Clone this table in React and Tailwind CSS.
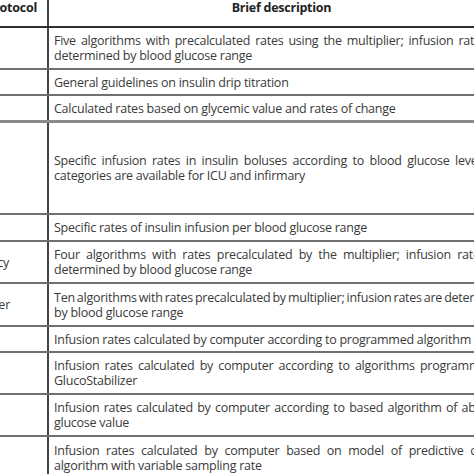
export default function App() {
  const rows = [
    {
      h: "h-[40px]",
      lines: [
        "Five algorithms with precalculated rates using the multiplier; infusion rates are",
        "determined by blood glucose range",
      ],
    },
    { h: "h-[24px]", lines: ["General guidelines on insulin drip titration"] },
    { h: "h-[24px]", lines: ["Calculated rates based on glycemic value and rates of change"], thick: true },
    {
      h: "h-[90px]",
      lines: [
        "Specific infusion rates in insulin boluses according to blood glucose level; two",
        "categories are available for ICU and infirmary",
      ],
    },
    { h: "h-[25px]", lines: ["Specific rates of insulin infusion per blood glucose range"] },
    {
      h: "h-[40px]",
      left: "Emergency",
      leftPad: "pr-[38px]",
      lines: [
        "Four algorithms with rates precalculated by the multiplier; infusion rates are",
        "determined by blood glucose range",
      ],
    },
    {
      h: "h-[41px]",
      left: "Glucommander",
      leftPad: "pr-[37px]",
      lines: [
        "Ten algorithms with rates precalculated by multiplier; infusion rates are determined",
        "by blood glucose range",
      ],
    },
    { h: "h-[24px]", lines: ["Infusion rates calculated by computer according to programmed algorithm"] },
    {
      h: "h-[40px]",
      lines: [
        "Infusion rates calculated by computer according to algorithms programmed in",
        "GlucoStabilizer",
      ],
    },
    {
      h: "h-[40px]",
      lines: [
        "Infusion rates calculated by computer according to based algorithm of absolute",
        "glucose value",
      ],
    },
    {
      h: "h-[42px]",
      last: true,
      lines: [
        "Infusion rates calculated by computer based on model of predictive control",
        "algorithm with variable sampling rate",
      ],
    },
  ];

  return (
    <div className="w-[474px] h-[474px] overflow-hidden bg-white">
      <div className="-ml-[100px] w-[612px] font-['Open_Sans',sans-serif] text-[12.5px] leading-[15px] tracking-[-0.25px] text-[#3a3a3a]">
        {/* header */}
        <div className="flex h-[28px] border-b-2 border-[#2e2e2e] font-bold text-[#222]">
          <div className="w-[149px] shrink-0 border-r-2 border-[#444] text-right pr-[10px] leading-[16px]">
            Protocol
          </div>
          <div className="flex-1 pl-[8px] pr-[6px] text-center leading-[16px]">Brief description</div>
        </div>

        {rows.map((r, i) => (
          <div
            key={i}
            className={`flex ${r.h} box-content ${
              r.last ? "" : r.thick ? "border-b-[3px] border-[#8a8a8a]" : "border-b-2 border-[#707070]"
            }`}
          >
            <div
              className={`w-[149px] shrink-0 border-r-2 border-[#444] flex items-center justify-end ${
                r.leftPad || ""
              }`}
            >
              {r.left}
            </div>
            <div className="flex-1 min-w-0 pl-[5px] pr-[2px] flex flex-col justify-center">
              {r.lines.map((l, j) =>
                j === 0 && r.lines.length > 1 ? (
                  <div key={j} className="flex justify-between whitespace-nowrap">
                    {l.split(" ").map((w, k) => (
                      <span key={k}>{w}</span>
                    ))}
                  </div>
                ) : (
                  <div key={j} className="whitespace-nowrap">
                    {l}
                  </div>
                )
              )}
            </div>
          </div>
        ))}
      </div>
    </div>
  );
}
